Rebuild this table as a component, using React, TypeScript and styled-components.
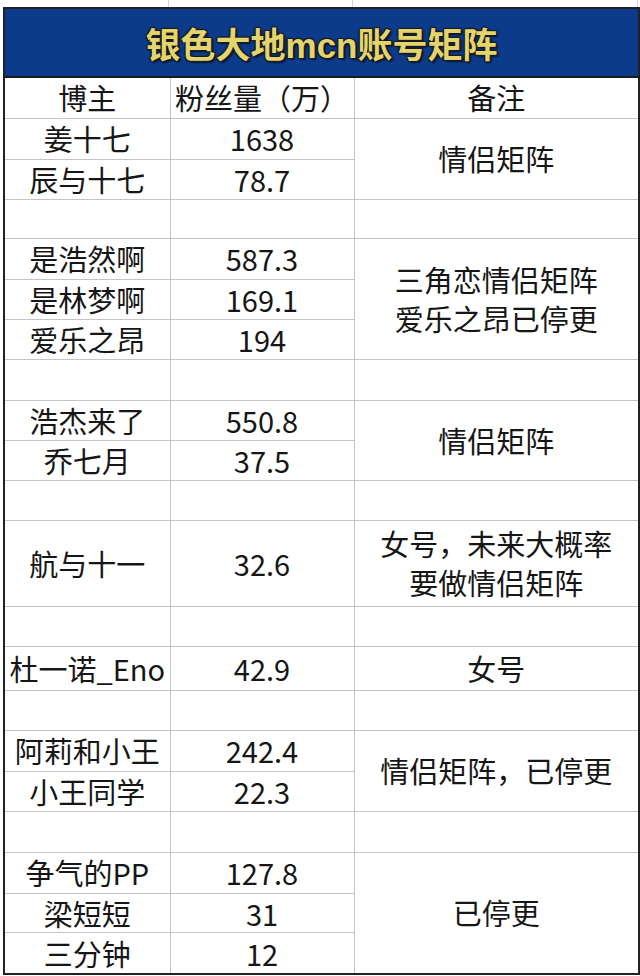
import React from "react";
import styled, { createGlobalStyle } from "styled-components";

const GlobalStyle = createGlobalStyle`
  html, body {
    margin: 0;
    padding: 0;
    background: #ffffff;
  }
  body {
    font-family: "Noto Sans CJK SC", "Noto Sans", sans-serif;
    color: #111;
  }
`;

const Page = styled.div`
  width: 640px;
  padding-left: 3px;
  box-sizing: border-box;
`;

const EdgeStrip = styled.div`
  display: flex;
  height: 7px;
`;

const EdgeCell = styled.div<{ $w: number }>`
  width: ${(p) => p.$w}px;
  border-right: 1px solid #d6d6d6;
  box-sizing: border-box;
`;

const Sheet = styled.table`
  border-collapse: collapse;
  table-layout: fixed;
  width: 635px;
  border: 2px solid #222;
`;

const Col = styled.col<{ $w: number }>`
  width: ${(p) => p.$w}px;
`;

const TitleCell = styled.th`
  height: 67px;
  padding: 0;
  background: #0d3b8c;
  border-bottom: 2px solid #1a1a1a;
  font-family: "Liberation Sans", "Noto Sans CJK SC", sans-serif;
  font-size: 35px;
  font-weight: 700;
  color: #e3d46e;
  text-shadow: 1px 1px 1px #1b1b1b, -1px -1px 1px #1b1b1b, 1px -1px 1px #1b1b1b,
    -1px 1px 1px #1b1b1b, 2px 2px 2px rgba(0, 0, 0, 0.6);
`;

const Row = styled.tr<{ $h: number }>`
  height: ${(p) => p.$h}px;
`;

const Cell = styled.td`
  padding: 0;
  border: 1px solid #c4c4c4;
  text-align: center;
  vertical-align: middle;
  font-size: 29px;
  font-weight: 400;
  line-height: 1.33;
  white-space: nowrap;
  color: #161616;
`;

type Note = { lines: string[]; span: number };
type Entry = { name?: string; fans?: string; h: number; note?: Note; blank?: boolean };

const widths = [166, 184, 285];

const entries: Entry[] = [
  { name: "姜十七", fans: "1638", h: 41, note: { lines: ["情侣矩阵"], span: 2 } },
  { name: "辰与十七", fans: "78.7", h: 40 },
  { h: 39, blank: true },
  { name: "是浩然啊", fans: "587.3", h: 41, note: { lines: ["三角恋情侣矩阵", "爱乐之昂已停更"], span: 3 } },
  { name: "是林梦啊", fans: "169.1", h: 40 },
  { name: "爱乐之昂", fans: "194", h: 40 },
  { h: 41, blank: true },
  { name: "浩杰来了", fans: "550.8", h: 40, note: { lines: ["情侣矩阵"], span: 2 } },
  { name: "乔七月", fans: "37.5", h: 40 },
  { h: 40, blank: true },
  { name: "航与十一", fans: "32.6", h: 86, note: { lines: ["女号，未来大概率", "要做情侣矩阵"], span: 1 } },
  { h: 40, blank: true },
  { name: "杜一诺_Eno", fans: "42.9", h: 44, note: { lines: ["女号"], span: 1 } },
  { h: 40, blank: true },
  { name: "阿莉和小王", fans: "242.4", h: 41, note: { lines: ["情侣矩阵，已停更"], span: 2 } },
  { name: "小王同学", fans: "22.3", h: 40 },
  { h: 41, blank: true },
  { name: "争气的PP", fans: "127.8", h: 41, note: { lines: ["已停更"], span: 3 } },
  { name: "梁短短", fans: "31", h: 39 },
  { name: "三分钟", fans: "12", h: 41 },
];

export default function App() {
  return (
    <Page>
      <GlobalStyle />
      <EdgeStrip>
        {widths.map((w, i) => (
          <EdgeCell key={i} $w={w} />
        ))}
      </EdgeStrip>
      <Sheet>
        <colgroup>
          {widths.map((w, i) => (
            <Col key={i} $w={w} />
          ))}
        </colgroup>
        <thead>
          <tr>
            <TitleCell colSpan={3}>银色大地mcn账号矩阵</TitleCell>
          </tr>
        </thead>
        <tbody>
          <Row $h={41}>
            <Cell>博主</Cell>
            <Cell>粉丝量（万）</Cell>
            <Cell>备注</Cell>
          </Row>
          {entries.map((e, i) =>
            e.blank ? (
              <Row key={i} $h={e.h}>
                <Cell />
                <Cell />
                <Cell />
              </Row>
            ) : (
              <Row key={i} $h={e.h}>
                <Cell>{e.name}</Cell>
                <Cell>{e.fans}</Cell>
                {e.note && (
                  <Cell rowSpan={e.note.span}>
                    {e.note.lines.map((l, j) => (
                      <React.Fragment key={j}>
                        {j > 0 && <br />}
                        {l}
                      </React.Fragment>
                    ))}
                  </Cell>
                )}
              </Row>
            )
          )}
        </tbody>
      </Sheet>
    </Page>
  );
}
